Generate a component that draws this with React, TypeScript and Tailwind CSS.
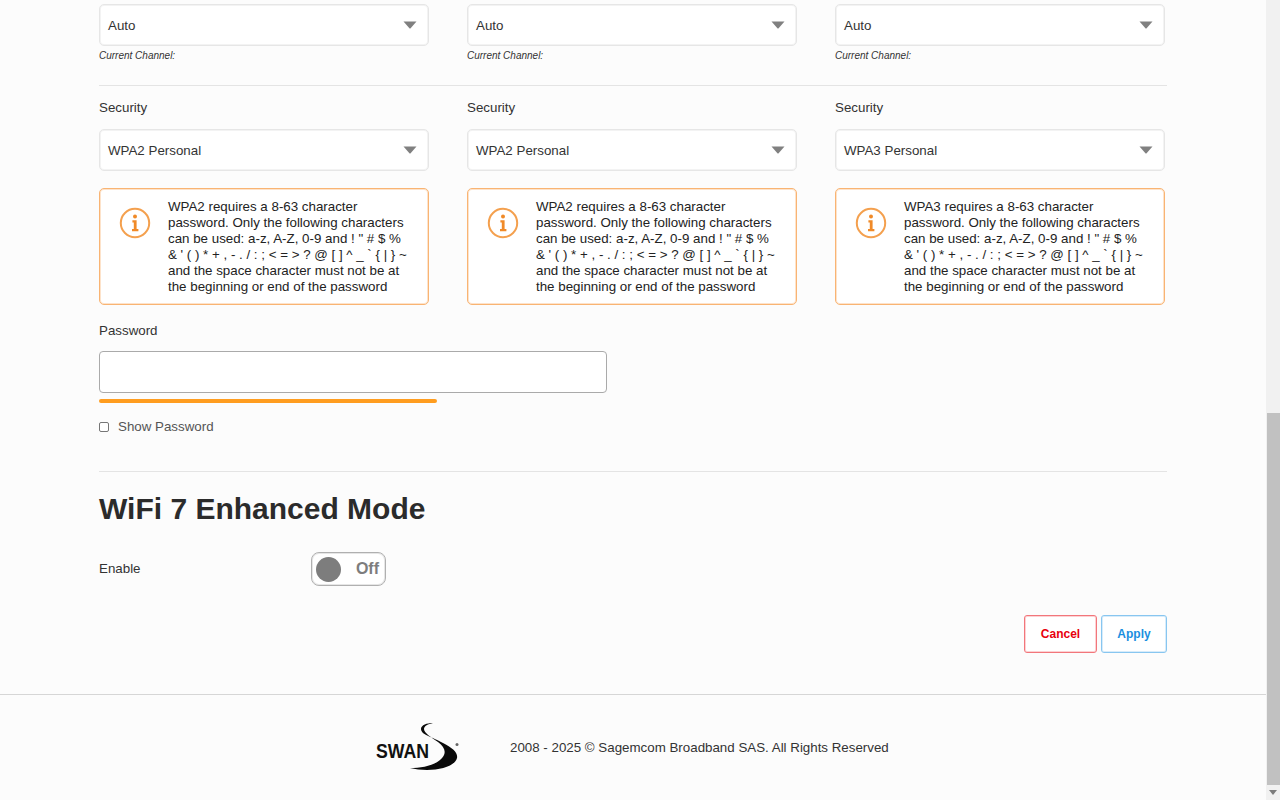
const INFO_ROWS = ["WPA2", "WPA2", "WPA3"];

function Arrow() {
  return (
    <svg width="14" height="8" viewBox="0 0 14 8" className="shrink-0">
      <path d="M0.5 0.5H13.5L7.6 7.2Q7 7.8 6.4 7.2Z" fill="#808080" />
    </svg>
  );
}

function SelectBox({ value }: { value: string }) {
  return (
    <div className="flex h-[42px] items-center justify-between rounded-[5px] border border-[#e6e6e6] bg-white pl-[8px] pr-[11px] text-[13.33px] text-[#333333] shadow-[inset_0_0_0_1px_#f3f3f3]">
      <span className="pt-[1px]">{value}</span>
      <Arrow />
    </div>
  );
}

function InfoIcon() {
  return (
    <svg width="32" height="32" viewBox="0 0 32 32" fill="none" className="shrink-0">
      <circle cx="16" cy="16" r="14.2" stroke="#f4a04e" strokeWidth="2" />
      <circle cx="16" cy="9.4" r="2" fill="#f08a28" />
      <path d="M13.4 13.2H17.6V22H19.4V24.2H13V22H14.8V15.4H13.4Z" fill="#f08a28" />
    </svg>
  );
}

function InfoBox({ kind }: { kind: string }) {
  return (
    <div className="flex h-[117px] items-start rounded-[5px] border border-[#f9b473] bg-white pl-[19px] pt-[10px] shadow-[inset_0_0_0_1px_#fde3cb]">
      <div className="mt-[8px]">
        <InfoIcon />
      </div>
      <p className="ml-[17px] w-[245px] text-[13.33px] leading-[16px] text-[#222222]">
        {kind} requires a 8-63 character
        <br />
        password. Only the following characters
        <br />
        can be used: a-z, A-Z, 0-9 and ! " # $ %
        <br />
        {"& ' ( ) * + , - . / : ; < = > ? @ [ ] ^ _ ` { | } ~"}
        <br />
        and the space character must not be at
        <br />
        the beginning or end of the password
      </p>
    </div>
  );
}

function SwanLogo() {
  return (
    <svg width="84" height="50" viewBox="0 0 84 50">
      <text
        x="1"
        y="36"
        fontFamily="Liberation Sans, Arial, sans-serif"
        fontWeight="700"
        fontSize="19.5"
        textLength="53"
        lengthAdjust="spacingAndGlyphs"
        fill="#111111"
      >
        SWAN
      </text>
      <path
        d="M58 1C52 1 46 3 46 7C46 13 58 15 68 21C78 26 83 31 82 36C80 44 66 48 52 48C46 48 40 47 35 46C46 46 58 44 65 38C72 32 71 26 63 20C56 15 49 11 49 7C49 4 53 2 58 1Z"
        fill="#0a0a0a"
      />
      <circle cx="82" cy="22.5" r="1.5" fill="#666666" />
    </svg>
  );
}

export default function App() {
  return (
    <div className="flex h-[800px] w-[1280px] overflow-hidden bg-[#fcfcfc] font-['Liberation_Sans',Arial,sans-serif]">
      <main className="w-[1266px] shrink-0">
        <div className="pl-[99px] pt-[4px]">
          <div className="grid w-[1066px] grid-cols-[330px_330px_330px] gap-x-[38px]">
            {INFO_ROWS.map((_, i) => (
              <div key={i}>
                <SelectBox value="Auto" />
                <p className="mt-[3px] text-[10px] italic leading-[14px] text-[#333333]">Current Channel:</p>
              </div>
            ))}
          </div>

          <div className="mt-[22px] h-px w-[1068px] bg-[#e4e4e4]" />

          <div className="mt-[14px] grid w-[1066px] grid-cols-[330px_330px_330px] gap-x-[38px]">
            {INFO_ROWS.map((kind, i) => (
              <div key={i}>
                <p className="text-[13.33px] leading-[16px] text-[#333333]">Security</p>
                <div className="mt-[13px]">
                  <SelectBox value={`${kind} Personal`} />
                </div>
                <div className="mt-[17px]">
                  <InfoBox kind={kind} />
                </div>
              </div>
            ))}
          </div>

          <p className="mt-[17px] text-[13.33px] leading-[18px] text-[#333333]">Password</p>
          <div className="mt-[11px] h-[42px] w-[508px] rounded-[4px] border border-[#aaaaaa] bg-white" />
          <div className="mt-[6px] h-[4px] w-[338px] rounded-full bg-[#ff9d1f]" />
          <label className="mt-[15px] flex h-[18px] items-center text-[13.33px] text-[#555555]">
            <span className="-mt-[1px] h-[10px] w-[10px] rounded-[2px] border border-[#767676] bg-white" />
            <span className="ml-[9px]">Show Password</span>
          </label>

          <div className="mt-[35px] h-px w-[1068px] bg-[#e4e4e4]" />

          <h2 className="mt-[19px] text-[30px] font-bold leading-[36px] text-[#2b2b2b]">WiFi 7 Enhanced Mode</h2>

          <div className="mt-[25px] flex h-[34px] items-center">
            <span className="w-[212px] text-[13.33px] text-[#333333]">Enable</span>
            <div className="flex h-[34px] w-[75px] items-center justify-between rounded-[8px] border border-[#b0b0b0] bg-white pl-[4px] pr-[6px] shadow-[inset_0_0_0_1px_#e6e6e6]">
              <span className="h-[25px] w-[25px] rounded-full bg-[#7d7d7d]" />
              <span className="text-[16px] font-bold text-[#7d7d7d]">Off</span>
            </div>
          </div>

          <div className="mt-[29px] flex w-[1068px] justify-end gap-[4px]">
            <button className="h-[38px] w-[73px] rounded-[3px] border border-[#f2767b] bg-white text-[12px] font-bold text-[#e8000d] shadow-[inset_0_0_0_1px_#fcd2d4]">
              Cancel
            </button>
            <button className="h-[38px] w-[66px] rounded-[3px] border border-[#88c6f0] bg-white text-[12px] font-bold text-[#1b8fe0] shadow-[inset_0_0_0_1px_#d8ecfa]">
              Apply
            </button>
          </div>
        </div>

        <footer className="mt-[41px] flex h-[106px] items-start border-t border-[#d6d6d6] pl-[375px]">
          <div className="mt-[27px]">
            <SwanLogo />
          </div>
          <p className="ml-[51px] mt-[44px] text-[13.33px] leading-[18px] text-[#333333]">
            2008 - 2025 © Sagemcom Broadband SAS. All Rights Reserved
          </p>
        </footer>
      </main>

      <div className="flex w-[14px] shrink-0 flex-col bg-[#f1f1f1]">
        <div className="h-[413px]" />
        <div className="mx-auto h-[372px] w-[13px] bg-[#c1c1c1]" />
        <div className="flex h-[15px] items-center justify-center">
          <svg width="8" height="5" viewBox="0 0 8 5">
            <path d="M0 0H8L4 5Z" fill="#7d7d7d" />
          </svg>
        </div>
      </div>
    </div>
  );
}
